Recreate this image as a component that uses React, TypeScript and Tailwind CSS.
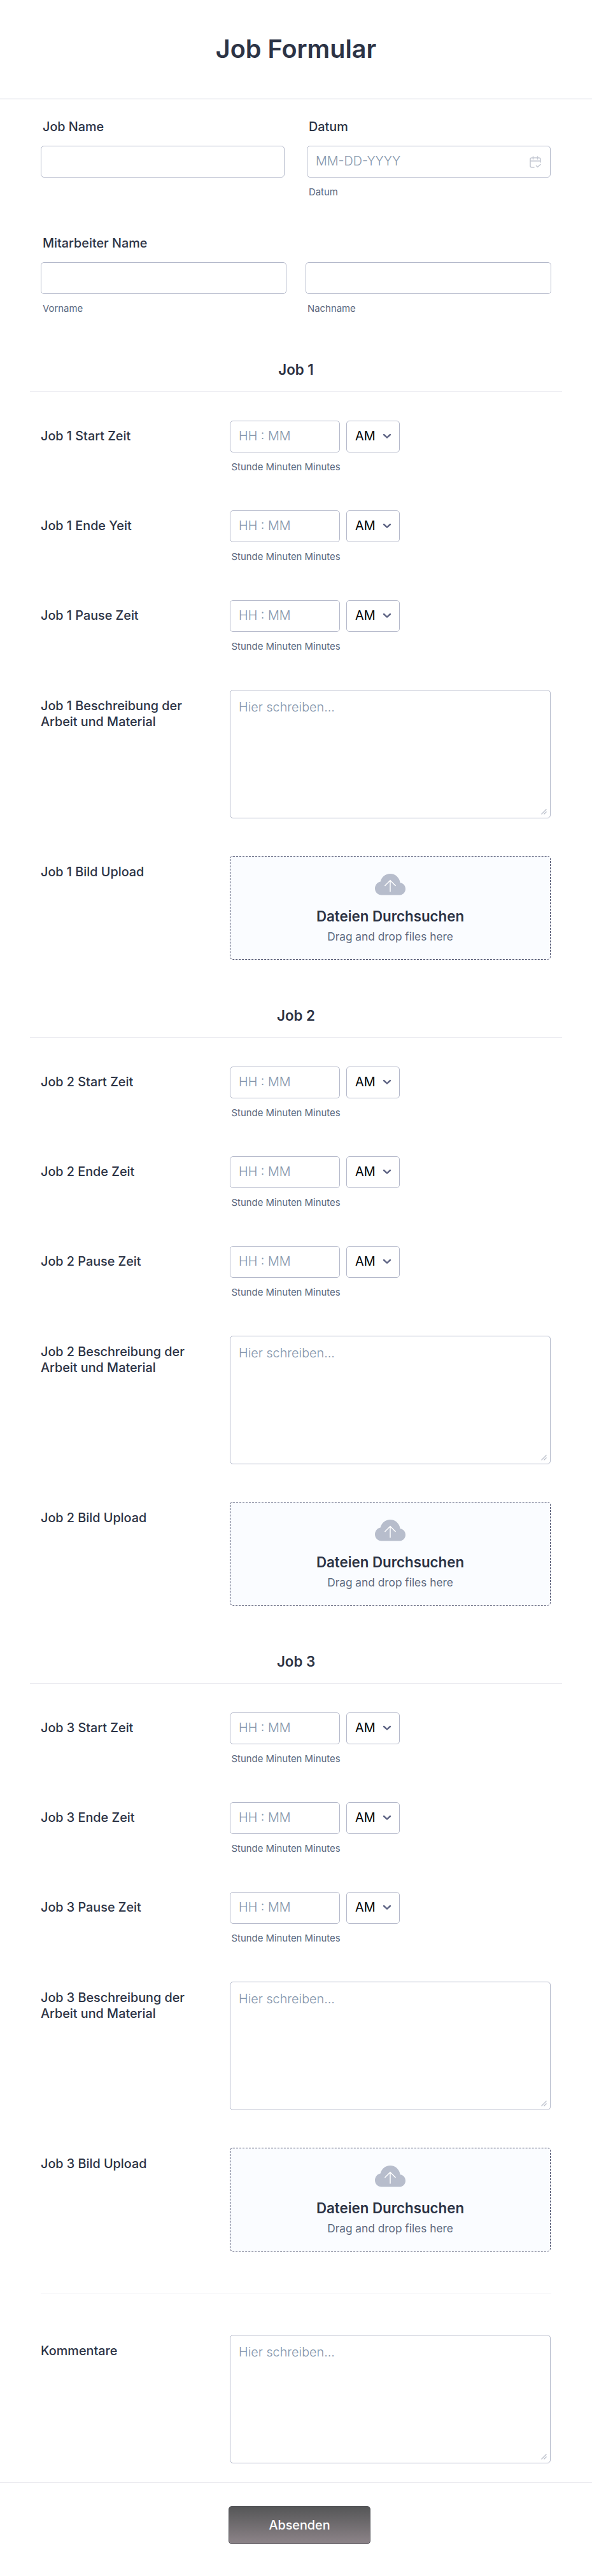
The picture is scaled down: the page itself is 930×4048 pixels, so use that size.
import React from "react";

const border = "rounded-[5px] border border-[#b3b8ca] bg-white";
const labelCls = "text-[19.8px] leading-[25px] font-medium text-[#2c3345]";
const subCls = "text-[14.9px] leading-[18px] text-[#5a677d] whitespace-nowrap";
const placeholderCls = "text-[19.8px] font-light text-[#8496ac] whitespace-nowrap";

function TimeRow({ label }: { label: string }) {
  return (
    <div className="flex h-[141px] pl-16">
      <div className={`w-[297px] pt-[12px] ${labelCls}`}>{label}</div>
      <div>
        <div className="flex gap-[10px]">
          <div className={`flex h-[50px] w-[173px] items-center pl-[13px] ${border} ${placeholderCls}`}>HH : MM</div>
          <div className={`flex h-[50px] w-[84px] items-center justify-between pr-[12px] pl-[13px] text-[19.8px] text-black ${border}`}>
            <span>AM</span>
            <svg width="14" height="9" viewBox="0 0 14 9" fill="none" stroke="#5e6484" strokeWidth="2.4" strokeLinecap="round" strokeLinejoin="round">
              <path d="M2 2l5 4.6L12 2" />
            </svg>
          </div>
        </div>
        <div className={`mt-[14px] pl-[2.5px] ${subCls}`}>Stunde Minuten Minutes</div>
      </div>
    </div>
  );
}

function TextAreaRow({ lines, className }: { lines: string[]; className: string }) {
  return (
    <div className={`flex pl-16 ${className}`}>
      <div className={`w-[297px] pt-[13px] ${labelCls}`}>
        {lines.map((l) => (
          <div key={l}>{l}</div>
        ))}
      </div>
      <div className={`flex h-[202px] w-[504px] flex-col justify-between ${border}`}>
        <div className={`pt-[14px] pl-[13px] leading-[25px] ${placeholderCls}`}>Hier schreiben...</div>
        <svg className="mr-[5px] mb-[5px] self-end" width="9" height="9" viewBox="0 0 9 9" stroke="#b8bdc9" strokeWidth="1.2">
          <path d="M0.5 8.5l8-8M4.5 8.5l4-4" />
        </svg>
      </div>
    </div>
  );
}

function UploadRow({ label, className }: { label: string; className: string }) {
  return (
    <div className={`flex pl-16 ${className}`}>
      <div className={`w-[297px] pt-[13px] ${labelCls}`}>{label}</div>
      <div className="flex h-[163px] w-[504px] flex-col items-center rounded-[5px] border border-dashed border-[#303657] bg-[#fafcff] pt-[27px]">
        <svg width="48" height="34" viewBox="0 0 48 34" fill="none">
          <path d="M10.5 33.5C4.7 33.5 0 29 0 23.2c0-5.4 3.7-10 8.6-10.8C10.3 5.2 16.5 0 24 0c8 0 14.5 6 15.7 14.3C44.5 14.8 48 18.9 48 23.9 48 29.5 43.5 33.5 38 33.5Z" fill="#b7bdcc" />
          <path d="M24 28.5V11M15.5 19L24 10.5l8.5 8.5" stroke="#fff" strokeWidth="1.5" />
        </svg>
        <div className="mt-[19px] text-[22.3px] leading-[28px] font-semibold text-[#2c3345]">Dateien Durchsuchen</div>
        <div className="mt-[7px] text-[17.3px] leading-[22px] text-[#5a677d]">Drag and drop files here</div>
      </div>
    </div>
  );
}

function JobSection({ n, labels }: { n: number; labels: string[] }) {
  return (
    <section className="h-[1015px]">
      <div className="mx-[47px] flex h-[75px] items-end justify-center border-b border-[#ebebf0] pb-[20px] text-[22.3px] leading-[28px] font-semibold text-[#2c3345]">
        Job {n}
      </div>
      <div className="h-[44.5px]" />
      {labels.map((l) => (
        <TimeRow key={l} label={`Job ${n} ${l}`} />
      ))}
      <TextAreaRow lines={[`Job ${n} Beschreibung der`, "Arbeit und Material"]} className="h-[261px]" />
      <UploadRow label={`Job ${n} Bild Upload`} className="h-[163px]" />
    </section>
  );
}

export default function App() {
  return (
    <div className="h-[4048px] w-[930px] overflow-hidden bg-white font-[Inter,sans-serif]">
      <header className="flex h-[156px] items-center justify-center border-b border-[#d0d2dc] pb-[2px]">
        <h1 className="text-[39.6px] leading-[48px] font-semibold text-[#2c3345]">Job Formular</h1>
      </header>
      <div className="flex h-[182px] gap-[35px] px-16 pt-[31px]">
        <div className="w-[383px]">
          <div className={`pl-[3px] ${labelCls}`}>Job Name</div>
          <div className={`mt-[17px] h-[50px] ${border}`} />
        </div>
        <div className="w-[383px]">
          <div className={`pl-[3px] ${labelCls}`}>Datum</div>
          <div className={`mt-[17px] flex h-[50px] items-center justify-between pr-[14px] pl-[13px] ${border} ${placeholderCls}`}>
            <span>MM-DD-YYYY</span>
            <svg width="18" height="19" viewBox="0 0 18 19" fill="none" stroke="#c5c9d3" strokeWidth="1.6" strokeLinecap="round" strokeLinejoin="round">
              <path d="M7 18H3.5Q1 18 1 15.5V5.5Q1 3 3.5 3h11Q17 3 17 5.5V10M1 8h16M5.5 1v4M12.5 1v4M10.5 15.500l2 2 4.500-4" />
            </svg>
          </div>
          <div className={`mt-[14px] pl-[3px] ${subCls}`}>Datum</div>
        </div>
      </div>
      <div className="h-[203px] px-16 pt-[32px]">
        <div className={`pl-[3px] ${labelCls}`}>Mitarbeiter Name</div>
        <div className="mt-[17px] flex gap-[30px]">
          <div className="flex-1">
            <div className={`h-[50px] ${border}`} />
            <div className={`mt-[14px] pl-[3px] ${subCls}`}>Vorname</div>
          </div>
          <div className="flex-1">
            <div className={`h-[50px] ${border}`} />
            <div className={`mt-[14px] pl-[3px] ${subCls}`}>Nachname</div>
          </div>
        </div>
      </div>
      <JobSection n={1} labels={["Start Zeit", "Ende Yeit", "Pause Zeit"]} />
      <JobSection n={2} labels={["Start Zeit", "Ende Zeit", "Pause Zeit"]} />
      <JobSection n={3} labels={["Start Zeit", "Ende Zeit", "Pause Zeit"]} />
      <div className="mx-16 mt-[17px] border-b border-[#f0f0f4]" />
      <TextAreaRow lines={["Kommentare"]} className="mt-[65px] h-[231px]" />
      <footer className="border-t-2 border-[#ededf2] pt-[36px]">
        <div className="ml-[359px] flex h-[60px] w-[223px] items-center justify-center rounded-[5px] border border-[#55565b] bg-linear-to-b from-[#555657] to-[#8d8489] pt-px text-[19.8px] font-medium text-white">
          Absenden
        </div>
      </footer>
    </div>
  );
}
